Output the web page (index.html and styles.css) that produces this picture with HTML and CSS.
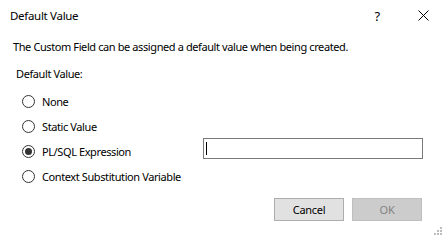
FILE: index.html
```html
<!DOCTYPE html>
<html lang="en">
<head>
    <meta charset="UTF-8">
    <title>Default Value</title>
    <link rel="stylesheet" href="styles.css">
</head>
<body>
    <div class="dialog">
        <div class="titlebar">
            <span class="title">Default Value</span>
            <span class="cap-btn help">?</span>
            <span class="cap-btn close">
                <svg width="11" height="11" viewBox="0 0 11 11"><path d="M0.5 0.5 L10.5 10.5 M10.5 0.5 L0.5 10.5" stroke="#000" stroke-width="1" fill="none"/></svg>
            </span>
        </div>
        <p class="desc">The Custom Field can be assigned a default value when being created.</p>
        <p class="group-label">Default Value:</p>
        <ul class="options">
            <li class="opt"><span class="radio"></span><span class="opt-text">None</span></li>
            <li class="opt"><span class="radio"></span><span class="opt-text">Static Value</span></li>
            <li class="opt"><span class="radio checked"></span><span class="opt-text">PL/SQL Expression</span>
                <div class="textbox"><span class="caret"></span></div>
            </li>
            <li class="opt"><span class="radio"></span><span class="opt-text">Context Substitution Variable</span></li>
        </ul>
        <div class="buttons">
            <button class="btn">Cancel</button>
            <button class="btn disabled">OK</button>
        </div>
        <svg class="grip" width="10" height="10" viewBox="0 0 10 10">
            <rect x="7" y="1" width="2" height="2" fill="#bdbdbd"/>
            <rect x="4" y="4" width="2" height="2" fill="#bdbdbd"/>
            <rect x="7" y="4" width="2" height="2" fill="#bdbdbd"/>
            <rect x="1" y="7" width="2" height="2" fill="#bdbdbd"/>
            <rect x="4" y="7" width="2" height="2" fill="#bdbdbd"/>
            <rect x="7" y="7" width="2" height="2" fill="#bdbdbd"/>
        </svg>
    </div>
</body>
</html>
```

FILE: styles.css
```css
*{
    margin: 0;
    padding: 0;
    box-sizing: border-box;
}
html,body{
    width: 100%;
    height: 100%;
    overflow: hidden;
    background: #fff;
}
body{
    font-family: "Noto Sans", "Open Sans", sans-serif;
    font-size: 11px;
    letter-spacing: -0.4px;
    color: #000;
}
.dialog{
    position: relative;
    width: 446px;
    height: 238px;
    background: #fff;
}
.titlebar{
    display: flex;
    align-items: center;
    height: 31px;
    padding-left: 10px;
}
.title{
    flex: 1;
    font-size: 11.5px;
    letter-spacing: -0.3px;
}
.cap-btn{
    display: flex;
    align-items: center;
    justify-content: center;
    width: 46px;
    height: 31px;
}
.help{
    font-size: 13px;
}
.desc{
    margin: 9px 0 0 13px;
    line-height: 14px;
}
.group-label{
    margin: 13px 0 0 16px;
    line-height: 14px;
}
.options{
    list-style: none;
    margin-top: 8px;
    padding: 0 23px 0 22px;
}
.opt{
    display: flex;
    align-items: center;
    height: 25px;
}
.radio{
    position: relative;
    width: 13px;
    height: 13px;
    border: 1px solid #333;
    border-radius: 50%;
    background: #fff;
    margin-right: 7px;
}
.radio.checked::after{
    content: "";
    position: absolute;
    left: 2px;
    top: 2px;
    width: 7px;
    height: 7px;
    border-radius: 50%;
    background: #333;
}
.textbox{
    margin-left: auto;
    margin-top: -7px;
    width: 220px;
    height: 21px;
    border: 1px solid #7a7a7a;
    background: #fff;
    padding: 3px 2px;
}
.caret{
    display: block;
    width: 1px;
    height: 13px;
    background: #000;
}
.buttons{
    display: flex;
    justify-content: flex-end;
    gap: 8px;
    padding-right: 24px;
    margin-top: 9px;
}
.btn{
    width: 70px;
    height: 23px;
    border: 1px solid #adadad;
    background: #e1e1e1;
    font-family: inherit;
    font-size: 11px;
    letter-spacing: -0.3px;
    color: #000;
}
.btn.disabled{
    border-color: #bfbfbf;
    background: #cccccc;
    color: #838383;
}
.grip{
    position: absolute;
    right: 3px;
    bottom: 2px;
}
```
